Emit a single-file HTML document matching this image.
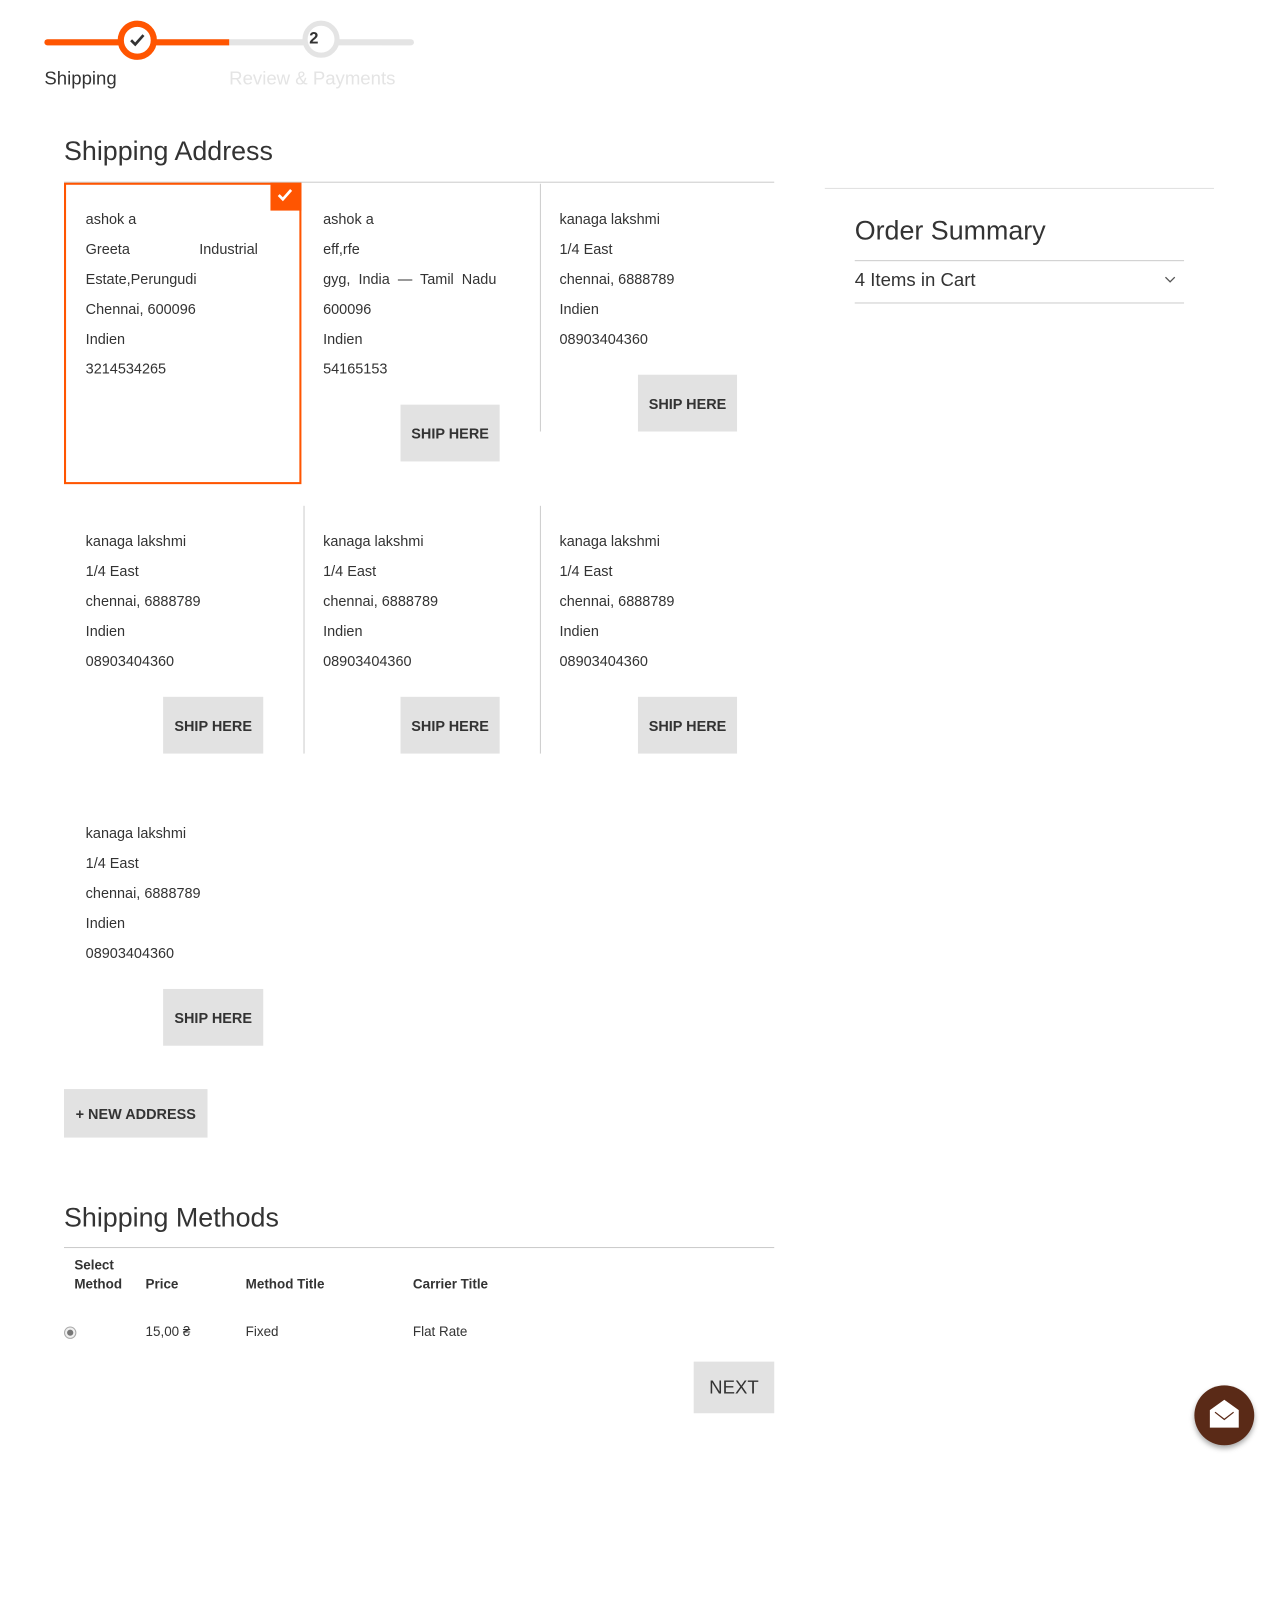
<!DOCTYPE html>
<html><head><meta charset="utf-8"><style>
*{margin:0;padding:0;box-sizing:border-box}
body{width:1280px;height:1617px;background:#fff;font-family:"Liberation Sans",sans-serif;color:#333;position:relative;overflow:hidden}
#w{position:absolute;left:0;top:0;width:1240px;height:1567px;transform:scale(1.0323);transform-origin:0 0}
.a{position:absolute;white-space:nowrap}
.t{position:absolute;font-size:14px;line-height:18px;color:#333;white-space:nowrap}
.btn{position:absolute;background:#e2e2e2;font-weight:bold;font-size:14px;color:#333;display:flex;align-items:center;justify-content:center;height:55px}
.h{position:absolute;font-size:26px;color:#333;white-space:nowrap;line-height:30px}
.line{position:absolute;background:#ccc;height:1px}
.vl{position:absolute;width:1px;background:#ccc}
.th{position:absolute;font-size:13px;font-weight:bold;line-height:18px;color:#333}
</style></head><body><div id="w">
<div class="a" style="left:43px;top:38px;width:358px;height:6px;background:#e4e4e4;border-radius:3px"></div>
<div class="a" style="left:43px;top:38px;width:179px;height:6px;background:#ff5501;border-radius:3px 0 0 3px"></div>
<div class="a" style="left:114px;top:20px;width:38px;height:38px;border-radius:50%;border:6px solid #ff5501;background:#fff"></div>
<svg class="a" style="left:124px;top:31px" width="18" height="16" viewBox="0 0 18 16"><path d="M3 8l4 4 8-9" stroke="#333" stroke-width="2.6" fill="none"/></svg>
<div class="a" style="left:293px;top:20px;width:36px;height:36px;border-radius:50%;border:5px solid #e4e4e4;background:#fff"></div>
<div class="a" style="left:293px;top:29px;width:22px;text-align:center;font-size:16px;font-weight:bold;color:#333">2</div>
<div class="a" style="left:43px;top:66px;font-size:18px;color:#333">Shipping</div>
<div class="a" style="left:222px;top:66px;font-size:18px;color:#e4e4e4">Review &amp; Payments</div>

<div class="h" style="left:62px;top:131px">Shipping Address</div>
<div class="line" style="left:62px;top:176px;width:688px"></div>

<div class="a" style="left:62px;top:177px;width:230px;height:292px;border:2px solid #ff5501"></div>
<div class="a" style="left:262px;top:177px;width:30px;height:27px;background:#ff5501"></div>
<svg class="a" style="left:268px;top:182px" width="16" height="14" viewBox="0 0 16 14"><path d="M2 7l4 4 8-9" stroke="#fff" stroke-width="2.6" fill="none"/></svg>
<div class="t" style="left:83px;top:203px">ashok a</div>
<div class="t" style="left:83px;top:232px">Greeta</div><div class="t" style="left:193px;top:232px">Industrial</div>
<div class="t" style="left:83px;top:261px">Estate,Perungudi</div>
<div class="t" style="left:83px;top:290px">Chennai, 600096</div>
<div class="t" style="left:83px;top:319px">Indien</div>
<div class="t" style="left:83px;top:348px">3214534265</div>
<div class="t" style="left:313px;top:203px">ashok a</div>
<div class="t" style="left:313px;top:232px">eff,rfe</div>
<div class="t" style="left:313px;top:261px">gyg,&nbsp; India &nbsp;—&nbsp; Tamil&nbsp; Nadu</div>
<div class="t" style="left:313px;top:290px">600096</div>
<div class="t" style="left:313px;top:319px">Indien</div>
<div class="t" style="left:313px;top:348px">54165153</div>
<div class="btn" style="left:388px;top:392px;width:96px">SHIP HERE</div>
<div class="vl" style="left:523px;top:178px;height:240px"></div>
<div class="t" style="left:542px;top:203px">kanaga lakshmi</div>
<div class="t" style="left:542px;top:232px">1/4 East</div>
<div class="t" style="left:542px;top:261px">chennai, 6888789</div>
<div class="t" style="left:542px;top:290px">Indien</div>
<div class="t" style="left:542px;top:319px">08903404360</div>
<div class="btn" style="left:618px;top:363px;width:96px">SHIP HERE</div>

<div class="vl" style="left:294px;top:490px;height:240px"></div>
<div class="vl" style="left:523px;top:490px;height:240px"></div>
<div class="t" style="left:83px;top:515px">kanaga lakshmi</div>
<div class="t" style="left:83px;top:544px">1/4 East</div>
<div class="t" style="left:83px;top:573px">chennai, 6888789</div>
<div class="t" style="left:83px;top:602px">Indien</div>
<div class="t" style="left:83px;top:631px">08903404360</div>
<div class="btn" style="left:158px;top:675px;width:97px">SHIP HERE</div>
<div class="t" style="left:313px;top:515px">kanaga lakshmi</div>
<div class="t" style="left:313px;top:544px">1/4 East</div>
<div class="t" style="left:313px;top:573px">chennai, 6888789</div>
<div class="t" style="left:313px;top:602px">Indien</div>
<div class="t" style="left:313px;top:631px">08903404360</div>
<div class="btn" style="left:388px;top:675px;width:96px">SHIP HERE</div>
<div class="t" style="left:542px;top:515px">kanaga lakshmi</div>
<div class="t" style="left:542px;top:544px">1/4 East</div>
<div class="t" style="left:542px;top:573px">chennai, 6888789</div>
<div class="t" style="left:542px;top:602px">Indien</div>
<div class="t" style="left:542px;top:631px">08903404360</div>
<div class="btn" style="left:618px;top:675px;width:96px">SHIP HERE</div>
<div class="t" style="left:83px;top:798px">kanaga lakshmi</div>
<div class="t" style="left:83px;top:827px">1/4 East</div>
<div class="t" style="left:83px;top:856px">chennai, 6888789</div>
<div class="t" style="left:83px;top:885px">Indien</div>
<div class="t" style="left:83px;top:914px">08903404360</div>
<div class="btn" style="left:158px;top:958px;width:97px">SHIP HERE</div>

<div class="btn" style="left:62px;top:1055px;width:139px;height:47px">+ NEW ADDRESS</div>

<div class="h" style="left:62px;top:1164px">Shipping Methods</div>
<div class="line" style="left:62px;top:1208px;width:688px"></div>
<div class="th" style="left:72px;top:1217px">Select<br>Method</div>
<div class="th" style="left:141px;top:1235px">Price</div>
<div class="th" style="left:238px;top:1235px">Method Title</div>
<div class="th" style="left:400px;top:1235px">Carrier Title</div>
<div class="a" style="left:62px;top:1285px;width:12px;height:12px;border-radius:50%;border:1px solid #aaa;background:#f0f0f0"></div>
<div class="a" style="left:65px;top:1288px;width:6px;height:6px;border-radius:50%;background:#777"></div>
<div class="t" style="left:141px;top:1281px;font-size:13px">15,00 ₴</div>
<div class="t" style="left:238px;top:1281px;font-size:13px">Fixed</div>
<div class="t" style="left:400px;top:1281px;font-size:13px">Flat Rate</div>
<div class="btn" style="left:672px;top:1319px;width:78px;height:50px;font-weight:normal;font-size:18px">NEXT</div>

<div class="line" style="left:799px;top:182px;width:377px;background:#e0e0e0"></div>
<div class="h" style="left:828px;top:208px">Order Summary</div>
<div class="line" style="left:828px;top:252px;width:319px"></div>
<div class="a" style="left:828px;top:261px;font-size:18px;color:#333">4 Items in Cart</div>
<svg class="a" style="left:1128px;top:267px" width="11" height="8" viewBox="0 0 11 8"><path d="M1 1.5l4.5 4.5 4.5-4.5" stroke="#555" stroke-width="1.3" fill="none"/></svg>
<div class="line" style="left:828px;top:293px;width:319px"></div>

<div class="a" style="left:1157px;top:1342px;width:58px;height:58px;border-radius:50%;background:#5a2a17;box-shadow:0 3px 5px rgba(0,0,0,.35)"></div>
<svg class="a" style="left:1170px;top:1354px" width="32" height="32" viewBox="0 0 32 32"><path d="M2 12L16 2l14 10v17H2z" fill="#fff"/><path d="M7 14l9 7 9-7" stroke="#5a2a17" stroke-width="1.2" fill="none"/></svg>
</div></body></html>
